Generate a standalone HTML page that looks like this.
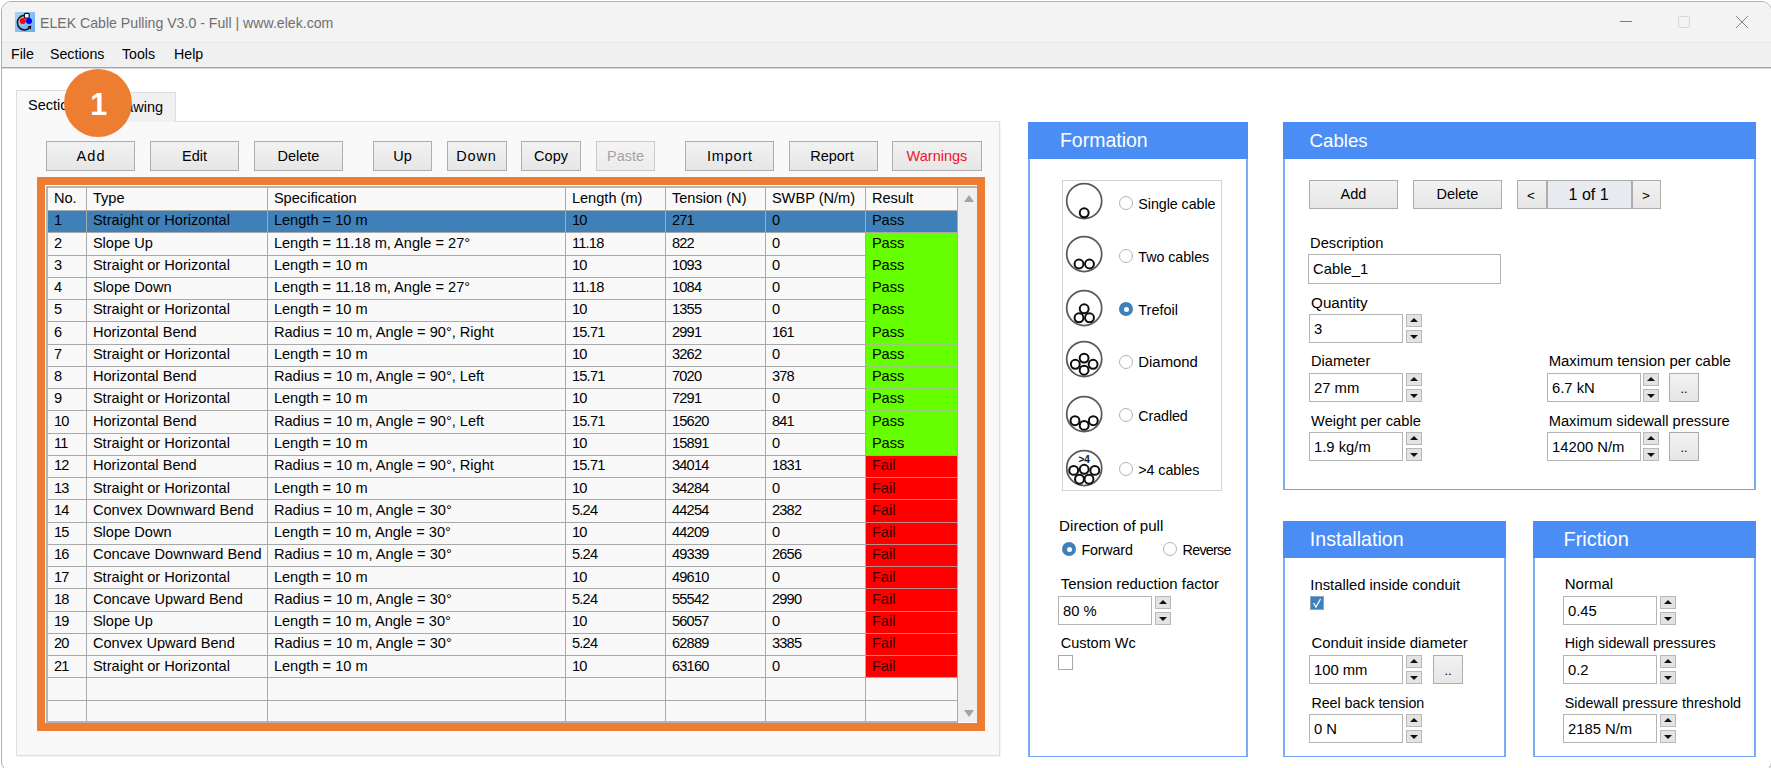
<!DOCTYPE html><html><head><meta charset="utf-8"><style>
*{margin:0;padding:0;box-sizing:content-box}
html,body{width:1771px;height:768px;overflow:hidden;background:#fff;font-family:"Liberation Sans", sans-serif}
.t{position:absolute;white-space:nowrap;line-height:1;}
.b{position:absolute}
.btn{position:absolute;border:1px solid #adadad}
.tb{position:absolute;border:1px solid #b4b4b4;background:#fff}
.spn{position:absolute;border:1px solid #b9b9b9;background:#e3e3e3}
.au,.ad{position:absolute;left:3px;width:0;height:0;border-left:4px solid transparent;border-right:4px solid transparent}
.au{top:3px;border-bottom:4px solid #111}
.ad{top:4px;border-top:4px solid #111}
.hdr{position:absolute;background:#4a8df5}
.pnl{position:absolute;border:1px solid #6fa2f3;border-left:2px solid #7eabf5;border-right:2px solid #7eabf5;background:#fff}
</style></head><body>
<div class="b" style="left:1px;top:1px;width:1771px;height:771px;border:1px solid #b0b0b0;border-radius:10px;background:#fff;box-sizing:border-box;overflow:hidden">
<div class="b" style="left:0;top:0;width:1776px;height:40px;background:#f3f3f3"></div>
<div class="b" style="left:0;top:40px;width:1776px;height:1px;background:#e6e6e6"></div>
<div class="b" style="left:0;top:41px;width:1776px;height:24px;background:#f0f0f0"></div>
<div class="b" style="left:0;top:65px;width:1776px;height:1px;background:#a3a3a3"></div>
<div class="b" style="left:0;top:66px;width:1776px;height:1px;background:#d8d8d8"></div>
</div>
<svg class="b" style="left:15px;top:12px" width="20" height="20" viewBox="0 0 20 20">
<defs><linearGradient id="ig" x1="0" y1="0" x2="1" y2="1"><stop offset="0" stop-color="#a9d3f8"/><stop offset="1" stop-color="#66acf4"/></linearGradient></defs>
<rect x="0" y="0" width="20" height="20" fill="url(#ig)"/>
<path d="M9.5 3.6 C5 3.4 2.4 7 2.4 10.6 C2.4 15 5.6 17.9 9.6 17.9 C12 17.9 13.6 17 14.8 15.6" fill="none" stroke="#161616" stroke-width="1.5"/>
<path d="M12.4 14.6 L16.3 13.4 L15.9 17.2 Z" fill="#111"/>
<rect x="9.4" y="1.4" width="4.8" height="4.8" rx="1.2" fill="#fff" stroke="#111" stroke-width="1.2"/>
<circle cx="7.8" cy="8.9" r="3" fill="#f00"/>
<circle cx="14" cy="8.9" r="3" fill="#00f"/>
</svg>
<div class="t " style="left:40px;top:15.93px;font-size:14.14px;color:#6f6f6f;">ELEK Cable Pulling V3.0 - Full | www.elek.com</div>
<div class="b" style="left:1620px;top:21px;width:12px;height:1px;background:#7b7b7b"></div>
<div class="b" style="left:1678px;top:16px;width:10px;height:10px;border:1px solid #d8d8d8;border-radius:2px"></div>
<svg class="b" style="left:1735px;top:15px" width="14" height="14" viewBox="0 0 14 14"><path d="M1 1 L13 13 M13 1 L1 13" stroke="#858585" stroke-width="1"/></svg>
<div class="t " style="left:11px;top:46.68px;font-size:14.2px;color:#000;">File</div>
<div class="t " style="left:50px;top:46.68px;font-size:14.2px;color:#000;">Sections</div>
<div class="t " style="left:122px;top:46.68px;font-size:14.2px;color:#000;">Tools</div>
<div class="t " style="left:174px;top:46.68px;font-size:14.2px;color:#000;">Help</div>
<div class="b" style="left:16px;top:121px;width:982px;height:633px;border:1px solid #dedede;box-shadow:1px 1px 1px rgba(0,0,0,0.04);background:#f9f9f9"></div>
<div class="b" style="left:98px;top:92px;width:76px;height:29px;border:1px solid #dedede;border-bottom:none;background:#f0f0f0"></div>
<div class="b" style="left:16px;top:90px;width:84px;height:32px;border:1px solid #dedede;border-bottom:none;background:#f9f9f9"></div>
<div class="t " style="left:28px;top:97.73px;font-size:14.5px;color:#000;">Sections</div>
<div class="t " style="left:110px;top:99.73px;font-size:14.5px;color:#000;">Drawing</div>
<div class="btn" style="left:46px;top:141px;width:87px;height:28px;border-color:#adadad;background:linear-gradient(#f2f2f2,#e6e6e6);"></div>
<div class="t " style="left:76.4px;top:148.93px;font-size:14.5px;color:#000;letter-spacing:1.2px;">Add</div>
<div class="btn" style="left:150px;top:141px;width:87px;height:28px;border-color:#adadad;background:linear-gradient(#f2f2f2,#e6e6e6);"></div>
<div class="t " style="left:182.0px;top:148.93px;font-size:14.5px;color:#000;">Edit</div>
<div class="btn" style="left:254px;top:141px;width:87px;height:28px;border-color:#adadad;background:linear-gradient(#f2f2f2,#e6e6e6);"></div>
<div class="t " style="left:277.5px;top:148.93px;font-size:14.5px;color:#000;">Delete</div>
<div class="btn" style="left:373px;top:141px;width:57px;height:28px;border-color:#adadad;background:linear-gradient(#f2f2f2,#e6e6e6);"></div>
<div class="t " style="left:393.2px;top:148.93px;font-size:14.5px;color:#000;">Up</div>
<div class="btn" style="left:447px;top:141px;width:58px;height:28px;border-color:#adadad;background:linear-gradient(#f2f2f2,#e6e6e6);"></div>
<div class="t " style="left:456.3px;top:148.93px;font-size:14.5px;color:#000;letter-spacing:0.8px;">Down</div>
<div class="btn" style="left:521px;top:141px;width:58px;height:28px;border-color:#adadad;background:linear-gradient(#f2f2f2,#e6e6e6);"></div>
<div class="t " style="left:534.1px;top:148.93px;font-size:14.5px;color:#000;">Copy</div>
<div class="btn" style="left:596px;top:141px;width:57px;height:28px;border-color:#c9c9c9;background:linear-gradient(#f4f4f4,#ececec);"></div>
<div class="t " style="left:607.0px;top:148.93px;font-size:14.5px;color:#a3a3a3;">Paste</div>
<div class="btn" style="left:685px;top:141px;width:87px;height:28px;border-color:#adadad;background:linear-gradient(#f2f2f2,#e6e6e6);"></div>
<div class="t " style="left:707.0px;top:148.93px;font-size:14.5px;color:#000;letter-spacing:0.8px;">Import</div>
<div class="btn" style="left:789px;top:141px;width:87px;height:28px;border-color:#adadad;background:linear-gradient(#f2f2f2,#e6e6e6);"></div>
<div class="t " style="left:810.2px;top:148.93px;font-size:14.5px;color:#000;">Report</div>
<div class="btn" style="left:892px;top:141px;width:88px;height:28px;border-color:#adadad;background:linear-gradient(#f2f2f2,#e6e6e6);"></div>
<div class="t " style="left:906.6px;top:148.93px;font-size:14.5px;color:#f0142a;">Warnings</div>
<div class="b" style="left:37px;top:177px;width:948px;height:554px;background:#ed7d31"></div>
<div class="b" style="left:45px;top:185px;width:932px;height:538px;background:#fff"></div>
<div class="b" style="left:46px;top:186px;width:931px;height:2px;background:#b4b4b4"></div>
<div class="b" style="left:46px;top:186px;width:2px;height:536px;background:#b4b4b4"></div>
<div class="b" style="left:958px;top:188px;width:19px;height:534px;background:#efefef"></div>
<div class="b" style="left:964px;top:195px;width:0;height:0;border-left:5px solid transparent;border-right:5px solid transparent;border-bottom:7px solid #a3a3a3"></div>
<div class="b" style="left:964px;top:710px;width:0;height:0;border-left:5px solid transparent;border-right:5px solid transparent;border-top:7px solid #a3a3a3"></div>
<div class="b" style="left:48px;top:188px;width:909px;height:534px;background:#f9f9f9"></div>
<div class="b" style="left:48px;top:211px;width:909px;height:21px;background:#3f80b8"></div>
<div class="b" style="left:866px;top:233px;width:91px;height:22px;background:#66ff00"></div>
<div class="b" style="left:866px;top:256px;width:91px;height:21px;background:#66ff00"></div>
<div class="b" style="left:866px;top:278px;width:91px;height:21px;background:#66ff00"></div>
<div class="b" style="left:866px;top:300px;width:91px;height:21px;background:#66ff00"></div>
<div class="b" style="left:866px;top:322px;width:91px;height:22px;background:#66ff00"></div>
<div class="b" style="left:866px;top:345px;width:91px;height:21px;background:#66ff00"></div>
<div class="b" style="left:866px;top:367px;width:91px;height:21px;background:#66ff00"></div>
<div class="b" style="left:866px;top:389px;width:91px;height:21px;background:#66ff00"></div>
<div class="b" style="left:866px;top:411px;width:91px;height:22px;background:#66ff00"></div>
<div class="b" style="left:866px;top:434px;width:91px;height:21px;background:#66ff00"></div>
<div class="b" style="left:866px;top:456px;width:91px;height:21px;background:#ff0000"></div>
<div class="b" style="left:866px;top:478px;width:91px;height:21px;background:#ff0000"></div>
<div class="b" style="left:866px;top:500px;width:91px;height:22px;background:#ff0000"></div>
<div class="b" style="left:866px;top:523px;width:91px;height:21px;background:#ff0000"></div>
<div class="b" style="left:866px;top:545px;width:91px;height:21px;background:#ff0000"></div>
<div class="b" style="left:866px;top:567px;width:91px;height:21px;background:#ff0000"></div>
<div class="b" style="left:866px;top:589px;width:91px;height:22px;background:#ff0000"></div>
<div class="b" style="left:866px;top:612px;width:91px;height:21px;background:#ff0000"></div>
<div class="b" style="left:866px;top:634px;width:91px;height:21px;background:#ff0000"></div>
<div class="b" style="left:866px;top:656px;width:91px;height:21px;background:#ff0000"></div>
<div class="b" style="left:48px;top:210px;width:818px;height:1px;background:#a9a9a9"></div>
<div class="b" style="left:866px;top:210px;width:91px;height:1px;background:#a9a9a9"></div>
<div class="b" style="left:48px;top:232px;width:818px;height:1px;background:#a9a9a9"></div>
<div class="b" style="left:866px;top:232px;width:91px;height:1px;background:#a9a9a9"></div>
<div class="b" style="left:48px;top:255px;width:818px;height:1px;background:#a9a9a9"></div>
<div class="b" style="left:866px;top:255px;width:91px;height:1px;background:#9cc87c"></div>
<div class="b" style="left:48px;top:277px;width:818px;height:1px;background:#a9a9a9"></div>
<div class="b" style="left:866px;top:277px;width:91px;height:1px;background:#9cc87c"></div>
<div class="b" style="left:48px;top:299px;width:818px;height:1px;background:#a9a9a9"></div>
<div class="b" style="left:866px;top:299px;width:91px;height:1px;background:#9cc87c"></div>
<div class="b" style="left:48px;top:321px;width:818px;height:1px;background:#a9a9a9"></div>
<div class="b" style="left:866px;top:321px;width:91px;height:1px;background:#9cc87c"></div>
<div class="b" style="left:48px;top:344px;width:818px;height:1px;background:#a9a9a9"></div>
<div class="b" style="left:866px;top:344px;width:91px;height:1px;background:#9cc87c"></div>
<div class="b" style="left:48px;top:366px;width:818px;height:1px;background:#a9a9a9"></div>
<div class="b" style="left:866px;top:366px;width:91px;height:1px;background:#9cc87c"></div>
<div class="b" style="left:48px;top:388px;width:818px;height:1px;background:#a9a9a9"></div>
<div class="b" style="left:866px;top:388px;width:91px;height:1px;background:#9cc87c"></div>
<div class="b" style="left:48px;top:410px;width:818px;height:1px;background:#a9a9a9"></div>
<div class="b" style="left:866px;top:410px;width:91px;height:1px;background:#9cc87c"></div>
<div class="b" style="left:48px;top:433px;width:818px;height:1px;background:#a9a9a9"></div>
<div class="b" style="left:866px;top:433px;width:91px;height:1px;background:#9cc87c"></div>
<div class="b" style="left:48px;top:455px;width:818px;height:1px;background:#a9a9a9"></div>
<div class="b" style="left:866px;top:455px;width:91px;height:1px;background:#a9a9a9"></div>
<div class="b" style="left:48px;top:477px;width:818px;height:1px;background:#a9a9a9"></div>
<div class="b" style="left:866px;top:477px;width:91px;height:1px;background:#c08888"></div>
<div class="b" style="left:48px;top:499px;width:818px;height:1px;background:#a9a9a9"></div>
<div class="b" style="left:866px;top:499px;width:91px;height:1px;background:#c08888"></div>
<div class="b" style="left:48px;top:522px;width:818px;height:1px;background:#a9a9a9"></div>
<div class="b" style="left:866px;top:522px;width:91px;height:1px;background:#c08888"></div>
<div class="b" style="left:48px;top:544px;width:818px;height:1px;background:#a9a9a9"></div>
<div class="b" style="left:866px;top:544px;width:91px;height:1px;background:#c08888"></div>
<div class="b" style="left:48px;top:566px;width:818px;height:1px;background:#a9a9a9"></div>
<div class="b" style="left:866px;top:566px;width:91px;height:1px;background:#c08888"></div>
<div class="b" style="left:48px;top:588px;width:818px;height:1px;background:#a9a9a9"></div>
<div class="b" style="left:866px;top:588px;width:91px;height:1px;background:#c08888"></div>
<div class="b" style="left:48px;top:611px;width:818px;height:1px;background:#a9a9a9"></div>
<div class="b" style="left:866px;top:611px;width:91px;height:1px;background:#c08888"></div>
<div class="b" style="left:48px;top:633px;width:818px;height:1px;background:#a9a9a9"></div>
<div class="b" style="left:866px;top:633px;width:91px;height:1px;background:#c08888"></div>
<div class="b" style="left:48px;top:655px;width:818px;height:1px;background:#a9a9a9"></div>
<div class="b" style="left:866px;top:655px;width:91px;height:1px;background:#c08888"></div>
<div class="b" style="left:48px;top:677px;width:818px;height:1px;background:#a9a9a9"></div>
<div class="b" style="left:866px;top:677px;width:91px;height:1px;background:#a9a9a9"></div>
<div class="b" style="left:48px;top:700px;width:818px;height:1px;background:#a9a9a9"></div>
<div class="b" style="left:866px;top:700px;width:91px;height:1px;background:#a9a9a9"></div>
<div class="b" style="left:48px;top:722px;width:818px;height:1px;background:#a9a9a9"></div>
<div class="b" style="left:866px;top:722px;width:91px;height:1px;background:#a9a9a9"></div>
<div class="b" style="left:46px;top:721px;width:912px;height:2px;background:#b4b4b4"></div>
<div class="b" style="left:86px;top:188px;width:1px;height:534px;background:#a9a9a9"></div>
<div class="b" style="left:267px;top:188px;width:1px;height:534px;background:#a9a9a9"></div>
<div class="b" style="left:565px;top:188px;width:1px;height:534px;background:#a9a9a9"></div>
<div class="b" style="left:665px;top:188px;width:1px;height:534px;background:#a9a9a9"></div>
<div class="b" style="left:765px;top:188px;width:1px;height:534px;background:#a9a9a9"></div>
<div class="b" style="left:865px;top:188px;width:1px;height:534px;background:#a9a9a9"></div>
<div class="b" style="left:957px;top:188px;width:1px;height:534px;background:#a9a9a9"></div>
<div class="t " style="left:53.9px;top:191.14px;font-size:14.6px;color:#000;">No.</div>
<div class="t " style="left:92.9px;top:191.14px;font-size:14.6px;color:#000;">Type</div>
<div class="t " style="left:273.9px;top:191.14px;font-size:14.6px;color:#000;">Specification</div>
<div class="t " style="left:571.9px;top:191.14px;font-size:14.6px;color:#000;">Length (m)</div>
<div class="t " style="left:671.9px;top:191.14px;font-size:14.6px;color:#000;">Tension (N)</div>
<div class="t " style="left:771.9px;top:191.14px;font-size:14.6px;color:#000;">SWBP (N/m)</div>
<div class="t " style="left:871.9px;top:191.14px;font-size:14.6px;color:#000;">Result</div>
<div class="t " style="left:53.9px;top:213.44px;font-size:14.6px;color:#000;letter-spacing:-0.75px;">1</div>
<div class="t " style="left:92.9px;top:213.44px;font-size:14.6px;color:#000;">Straight or Horizontal</div>
<div class="t " style="left:273.9px;top:213.44px;font-size:14.6px;color:#000;">Length = 10 m</div>
<div class="t " style="left:571.9px;top:213.44px;font-size:14.6px;color:#000;letter-spacing:-0.75px;">10</div>
<div class="t " style="left:671.9px;top:213.44px;font-size:14.6px;color:#000;letter-spacing:-0.75px;">271</div>
<div class="t " style="left:771.9px;top:213.44px;font-size:14.6px;color:#000;letter-spacing:-0.75px;">0</div>
<div class="t " style="left:871.9px;top:213.44px;font-size:14.6px;color:#000;">Pass</div>
<div class="t " style="left:53.9px;top:235.64px;font-size:14.6px;color:#000;letter-spacing:-0.75px;">2</div>
<div class="t " style="left:92.9px;top:235.64px;font-size:14.6px;color:#000;">Slope Up</div>
<div class="t " style="left:273.9px;top:235.64px;font-size:14.6px;color:#000;">Length = 11.18 m, Angle = 27°</div>
<div class="t " style="left:571.9px;top:235.64px;font-size:14.6px;color:#000;letter-spacing:-0.75px;">11.18</div>
<div class="t " style="left:671.9px;top:235.64px;font-size:14.6px;color:#000;letter-spacing:-0.75px;">822</div>
<div class="t " style="left:771.9px;top:235.64px;font-size:14.6px;color:#000;letter-spacing:-0.75px;">0</div>
<div class="t " style="left:871.9px;top:235.64px;font-size:14.6px;color:#000;">Pass</div>
<div class="t " style="left:53.9px;top:257.94px;font-size:14.6px;color:#000;letter-spacing:-0.75px;">3</div>
<div class="t " style="left:92.9px;top:257.94px;font-size:14.6px;color:#000;">Straight or Horizontal</div>
<div class="t " style="left:273.9px;top:257.94px;font-size:14.6px;color:#000;">Length = 10 m</div>
<div class="t " style="left:571.9px;top:257.94px;font-size:14.6px;color:#000;letter-spacing:-0.75px;">10</div>
<div class="t " style="left:671.9px;top:257.94px;font-size:14.6px;color:#000;letter-spacing:-0.75px;">1093</div>
<div class="t " style="left:771.9px;top:257.94px;font-size:14.6px;color:#000;letter-spacing:-0.75px;">0</div>
<div class="t " style="left:871.9px;top:257.94px;font-size:14.6px;color:#000;">Pass</div>
<div class="t " style="left:53.9px;top:280.14px;font-size:14.6px;color:#000;letter-spacing:-0.75px;">4</div>
<div class="t " style="left:92.9px;top:280.14px;font-size:14.6px;color:#000;">Slope Down</div>
<div class="t " style="left:273.9px;top:280.14px;font-size:14.6px;color:#000;">Length = 11.18 m, Angle = 27°</div>
<div class="t " style="left:571.9px;top:280.14px;font-size:14.6px;color:#000;letter-spacing:-0.75px;">11.18</div>
<div class="t " style="left:671.9px;top:280.14px;font-size:14.6px;color:#000;letter-spacing:-0.75px;">1084</div>
<div class="t " style="left:771.9px;top:280.14px;font-size:14.6px;color:#000;letter-spacing:-0.75px;">0</div>
<div class="t " style="left:871.9px;top:280.14px;font-size:14.6px;color:#000;">Pass</div>
<div class="t " style="left:53.9px;top:302.44px;font-size:14.6px;color:#000;letter-spacing:-0.75px;">5</div>
<div class="t " style="left:92.9px;top:302.44px;font-size:14.6px;color:#000;">Straight or Horizontal</div>
<div class="t " style="left:273.9px;top:302.44px;font-size:14.6px;color:#000;">Length = 10 m</div>
<div class="t " style="left:571.9px;top:302.44px;font-size:14.6px;color:#000;letter-spacing:-0.75px;">10</div>
<div class="t " style="left:671.9px;top:302.44px;font-size:14.6px;color:#000;letter-spacing:-0.75px;">1355</div>
<div class="t " style="left:771.9px;top:302.44px;font-size:14.6px;color:#000;letter-spacing:-0.75px;">0</div>
<div class="t " style="left:871.9px;top:302.44px;font-size:14.6px;color:#000;">Pass</div>
<div class="t " style="left:53.9px;top:324.74px;font-size:14.6px;color:#000;letter-spacing:-0.75px;">6</div>
<div class="t " style="left:92.9px;top:324.74px;font-size:14.6px;color:#000;">Horizontal Bend</div>
<div class="t " style="left:273.9px;top:324.74px;font-size:14.6px;color:#000;">Radius = 10 m, Angle = 90°, Right</div>
<div class="t " style="left:571.9px;top:324.74px;font-size:14.6px;color:#000;letter-spacing:-0.75px;">15.71</div>
<div class="t " style="left:671.9px;top:324.74px;font-size:14.6px;color:#000;letter-spacing:-0.75px;">2991</div>
<div class="t " style="left:771.9px;top:324.74px;font-size:14.6px;color:#000;letter-spacing:-0.75px;">161</div>
<div class="t " style="left:871.9px;top:324.74px;font-size:14.6px;color:#000;">Pass</div>
<div class="t " style="left:53.9px;top:346.94px;font-size:14.6px;color:#000;letter-spacing:-0.75px;">7</div>
<div class="t " style="left:92.9px;top:346.94px;font-size:14.6px;color:#000;">Straight or Horizontal</div>
<div class="t " style="left:273.9px;top:346.94px;font-size:14.6px;color:#000;">Length = 10 m</div>
<div class="t " style="left:571.9px;top:346.94px;font-size:14.6px;color:#000;letter-spacing:-0.75px;">10</div>
<div class="t " style="left:671.9px;top:346.94px;font-size:14.6px;color:#000;letter-spacing:-0.75px;">3262</div>
<div class="t " style="left:771.9px;top:346.94px;font-size:14.6px;color:#000;letter-spacing:-0.75px;">0</div>
<div class="t " style="left:871.9px;top:346.94px;font-size:14.6px;color:#000;">Pass</div>
<div class="t " style="left:53.9px;top:369.24px;font-size:14.6px;color:#000;letter-spacing:-0.75px;">8</div>
<div class="t " style="left:92.9px;top:369.24px;font-size:14.6px;color:#000;">Horizontal Bend</div>
<div class="t " style="left:273.9px;top:369.24px;font-size:14.6px;color:#000;">Radius = 10 m, Angle = 90°, Left</div>
<div class="t " style="left:571.9px;top:369.24px;font-size:14.6px;color:#000;letter-spacing:-0.75px;">15.71</div>
<div class="t " style="left:671.9px;top:369.24px;font-size:14.6px;color:#000;letter-spacing:-0.75px;">7020</div>
<div class="t " style="left:771.9px;top:369.24px;font-size:14.6px;color:#000;letter-spacing:-0.75px;">378</div>
<div class="t " style="left:871.9px;top:369.24px;font-size:14.6px;color:#000;">Pass</div>
<div class="t " style="left:53.9px;top:391.44px;font-size:14.6px;color:#000;letter-spacing:-0.75px;">9</div>
<div class="t " style="left:92.9px;top:391.44px;font-size:14.6px;color:#000;">Straight or Horizontal</div>
<div class="t " style="left:273.9px;top:391.44px;font-size:14.6px;color:#000;">Length = 10 m</div>
<div class="t " style="left:571.9px;top:391.44px;font-size:14.6px;color:#000;letter-spacing:-0.75px;">10</div>
<div class="t " style="left:671.9px;top:391.44px;font-size:14.6px;color:#000;letter-spacing:-0.75px;">7291</div>
<div class="t " style="left:771.9px;top:391.44px;font-size:14.6px;color:#000;letter-spacing:-0.75px;">0</div>
<div class="t " style="left:871.9px;top:391.44px;font-size:14.6px;color:#000;">Pass</div>
<div class="t " style="left:53.9px;top:413.74px;font-size:14.6px;color:#000;letter-spacing:-0.75px;">10</div>
<div class="t " style="left:92.9px;top:413.74px;font-size:14.6px;color:#000;">Horizontal Bend</div>
<div class="t " style="left:273.9px;top:413.74px;font-size:14.6px;color:#000;">Radius = 10 m, Angle = 90°, Left</div>
<div class="t " style="left:571.9px;top:413.74px;font-size:14.6px;color:#000;letter-spacing:-0.75px;">15.71</div>
<div class="t " style="left:671.9px;top:413.74px;font-size:14.6px;color:#000;letter-spacing:-0.75px;">15620</div>
<div class="t " style="left:771.9px;top:413.74px;font-size:14.6px;color:#000;letter-spacing:-0.75px;">841</div>
<div class="t " style="left:871.9px;top:413.74px;font-size:14.6px;color:#000;">Pass</div>
<div class="t " style="left:53.9px;top:436.04px;font-size:14.6px;color:#000;letter-spacing:-0.75px;">11</div>
<div class="t " style="left:92.9px;top:436.04px;font-size:14.6px;color:#000;">Straight or Horizontal</div>
<div class="t " style="left:273.9px;top:436.04px;font-size:14.6px;color:#000;">Length = 10 m</div>
<div class="t " style="left:571.9px;top:436.04px;font-size:14.6px;color:#000;letter-spacing:-0.75px;">10</div>
<div class="t " style="left:671.9px;top:436.04px;font-size:14.6px;color:#000;letter-spacing:-0.75px;">15891</div>
<div class="t " style="left:771.9px;top:436.04px;font-size:14.6px;color:#000;letter-spacing:-0.75px;">0</div>
<div class="t " style="left:871.9px;top:436.04px;font-size:14.6px;color:#000;">Pass</div>
<div class="t " style="left:53.9px;top:458.24px;font-size:14.6px;color:#000;letter-spacing:-0.75px;">12</div>
<div class="t " style="left:92.9px;top:458.24px;font-size:14.6px;color:#000;">Horizontal Bend</div>
<div class="t " style="left:273.9px;top:458.24px;font-size:14.6px;color:#000;">Radius = 10 m, Angle = 90°, Right</div>
<div class="t " style="left:571.9px;top:458.24px;font-size:14.6px;color:#000;letter-spacing:-0.75px;">15.71</div>
<div class="t " style="left:671.9px;top:458.24px;font-size:14.6px;color:#000;letter-spacing:-0.75px;">34014</div>
<div class="t " style="left:771.9px;top:458.24px;font-size:14.6px;color:#000;letter-spacing:-0.75px;">1831</div>
<div class="t " style="left:871.9px;top:458.24px;font-size:14.6px;color:#3a0000;">Fail</div>
<div class="t " style="left:53.9px;top:480.54px;font-size:14.6px;color:#000;letter-spacing:-0.75px;">13</div>
<div class="t " style="left:92.9px;top:480.54px;font-size:14.6px;color:#000;">Straight or Horizontal</div>
<div class="t " style="left:273.9px;top:480.54px;font-size:14.6px;color:#000;">Length = 10 m</div>
<div class="t " style="left:571.9px;top:480.54px;font-size:14.6px;color:#000;letter-spacing:-0.75px;">10</div>
<div class="t " style="left:671.9px;top:480.54px;font-size:14.6px;color:#000;letter-spacing:-0.75px;">34284</div>
<div class="t " style="left:771.9px;top:480.54px;font-size:14.6px;color:#000;letter-spacing:-0.75px;">0</div>
<div class="t " style="left:871.9px;top:480.54px;font-size:14.6px;color:#3a0000;">Fail</div>
<div class="t " style="left:53.9px;top:502.74px;font-size:14.6px;color:#000;letter-spacing:-0.75px;">14</div>
<div class="t " style="left:92.9px;top:502.74px;font-size:14.6px;color:#000;">Convex Downward Bend</div>
<div class="t " style="left:273.9px;top:502.74px;font-size:14.6px;color:#000;">Radius = 10 m, Angle = 30°</div>
<div class="t " style="left:571.9px;top:502.74px;font-size:14.6px;color:#000;letter-spacing:-0.75px;">5.24</div>
<div class="t " style="left:671.9px;top:502.74px;font-size:14.6px;color:#000;letter-spacing:-0.75px;">44254</div>
<div class="t " style="left:771.9px;top:502.74px;font-size:14.6px;color:#000;letter-spacing:-0.75px;">2382</div>
<div class="t " style="left:871.9px;top:502.74px;font-size:14.6px;color:#3a0000;">Fail</div>
<div class="t " style="left:53.9px;top:525.04px;font-size:14.6px;color:#000;letter-spacing:-0.75px;">15</div>
<div class="t " style="left:92.9px;top:525.04px;font-size:14.6px;color:#000;">Slope Down</div>
<div class="t " style="left:273.9px;top:525.04px;font-size:14.6px;color:#000;">Length = 10 m, Angle = 30°</div>
<div class="t " style="left:571.9px;top:525.04px;font-size:14.6px;color:#000;letter-spacing:-0.75px;">10</div>
<div class="t " style="left:671.9px;top:525.04px;font-size:14.6px;color:#000;letter-spacing:-0.75px;">44209</div>
<div class="t " style="left:771.9px;top:525.04px;font-size:14.6px;color:#000;letter-spacing:-0.75px;">0</div>
<div class="t " style="left:871.9px;top:525.04px;font-size:14.6px;color:#3a0000;">Fail</div>
<div class="t " style="left:53.9px;top:547.34px;font-size:14.6px;color:#000;letter-spacing:-0.75px;">16</div>
<div class="t " style="left:92.9px;top:547.34px;font-size:14.6px;color:#000;">Concave Downward Bend</div>
<div class="t " style="left:273.9px;top:547.34px;font-size:14.6px;color:#000;">Radius = 10 m, Angle = 30°</div>
<div class="t " style="left:571.9px;top:547.34px;font-size:14.6px;color:#000;letter-spacing:-0.75px;">5.24</div>
<div class="t " style="left:671.9px;top:547.34px;font-size:14.6px;color:#000;letter-spacing:-0.75px;">49339</div>
<div class="t " style="left:771.9px;top:547.34px;font-size:14.6px;color:#000;letter-spacing:-0.75px;">2656</div>
<div class="t " style="left:871.9px;top:547.34px;font-size:14.6px;color:#3a0000;">Fail</div>
<div class="t " style="left:53.9px;top:569.54px;font-size:14.6px;color:#000;letter-spacing:-0.75px;">17</div>
<div class="t " style="left:92.9px;top:569.54px;font-size:14.6px;color:#000;">Straight or Horizontal</div>
<div class="t " style="left:273.9px;top:569.54px;font-size:14.6px;color:#000;">Length = 10 m</div>
<div class="t " style="left:571.9px;top:569.54px;font-size:14.6px;color:#000;letter-spacing:-0.75px;">10</div>
<div class="t " style="left:671.9px;top:569.54px;font-size:14.6px;color:#000;letter-spacing:-0.75px;">49610</div>
<div class="t " style="left:771.9px;top:569.54px;font-size:14.6px;color:#000;letter-spacing:-0.75px;">0</div>
<div class="t " style="left:871.9px;top:569.54px;font-size:14.6px;color:#3a0000;">Fail</div>
<div class="t " style="left:53.9px;top:591.84px;font-size:14.6px;color:#000;letter-spacing:-0.75px;">18</div>
<div class="t " style="left:92.9px;top:591.84px;font-size:14.6px;color:#000;">Concave Upward Bend</div>
<div class="t " style="left:273.9px;top:591.84px;font-size:14.6px;color:#000;">Radius = 10 m, Angle = 30°</div>
<div class="t " style="left:571.9px;top:591.84px;font-size:14.6px;color:#000;letter-spacing:-0.75px;">5.24</div>
<div class="t " style="left:671.9px;top:591.84px;font-size:14.6px;color:#000;letter-spacing:-0.75px;">55542</div>
<div class="t " style="left:771.9px;top:591.84px;font-size:14.6px;color:#000;letter-spacing:-0.75px;">2990</div>
<div class="t " style="left:871.9px;top:591.84px;font-size:14.6px;color:#3a0000;">Fail</div>
<div class="t " style="left:53.9px;top:614.04px;font-size:14.6px;color:#000;letter-spacing:-0.75px;">19</div>
<div class="t " style="left:92.9px;top:614.04px;font-size:14.6px;color:#000;">Slope Up</div>
<div class="t " style="left:273.9px;top:614.04px;font-size:14.6px;color:#000;">Length = 10 m, Angle = 30°</div>
<div class="t " style="left:571.9px;top:614.04px;font-size:14.6px;color:#000;letter-spacing:-0.75px;">10</div>
<div class="t " style="left:671.9px;top:614.04px;font-size:14.6px;color:#000;letter-spacing:-0.75px;">56057</div>
<div class="t " style="left:771.9px;top:614.04px;font-size:14.6px;color:#000;letter-spacing:-0.75px;">0</div>
<div class="t " style="left:871.9px;top:614.04px;font-size:14.6px;color:#3a0000;">Fail</div>
<div class="t " style="left:53.9px;top:636.34px;font-size:14.6px;color:#000;letter-spacing:-0.75px;">20</div>
<div class="t " style="left:92.9px;top:636.34px;font-size:14.6px;color:#000;">Convex Upward Bend</div>
<div class="t " style="left:273.9px;top:636.34px;font-size:14.6px;color:#000;">Radius = 10 m, Angle = 30°</div>
<div class="t " style="left:571.9px;top:636.34px;font-size:14.6px;color:#000;letter-spacing:-0.75px;">5.24</div>
<div class="t " style="left:671.9px;top:636.34px;font-size:14.6px;color:#000;letter-spacing:-0.75px;">62889</div>
<div class="t " style="left:771.9px;top:636.34px;font-size:14.6px;color:#000;letter-spacing:-0.75px;">3385</div>
<div class="t " style="left:871.9px;top:636.34px;font-size:14.6px;color:#3a0000;">Fail</div>
<div class="t " style="left:53.9px;top:658.64px;font-size:14.6px;color:#000;letter-spacing:-0.75px;">21</div>
<div class="t " style="left:92.9px;top:658.64px;font-size:14.6px;color:#000;">Straight or Horizontal</div>
<div class="t " style="left:273.9px;top:658.64px;font-size:14.6px;color:#000;">Length = 10 m</div>
<div class="t " style="left:571.9px;top:658.64px;font-size:14.6px;color:#000;letter-spacing:-0.75px;">10</div>
<div class="t " style="left:671.9px;top:658.64px;font-size:14.6px;color:#000;letter-spacing:-0.75px;">63160</div>
<div class="t " style="left:771.9px;top:658.64px;font-size:14.6px;color:#000;letter-spacing:-0.75px;">0</div>
<div class="t " style="left:871.9px;top:658.64px;font-size:14.6px;color:#3a0000;">Fail</div>
<div class="b" style="left:64px;top:69px;width:68px;height:68px;border-radius:50%;background:#ed7d31"></div>
<div class="t" style="left:64.7px;top:89px;width:68px;text-align:center;font-size:30.5px;font-weight:bold;color:#fff">1</div>
<div class="pnl" style="left:1028px;top:122px;width:216px;height:633px"></div>
<div class="hdr" style="left:1028px;top:122px;width:220px;height:37px"></div>
<div class="t " style="left:1059.9px;top:130.78px;font-size:19.51px;color:#fff;">Formation</div>
<div class="b" style="left:1062px;top:180px;width:158px;height:309px;border:1px solid #d4d4d4;background:#fff"></div>
<div class="b" style="left:1119px;top:196px;width:12px;height:12px;border-radius:50%;border:1px solid #b3b3b3;background:#fff"></div>
<div class="t " style="left:1138.3px;top:196.90px;font-size:14.3px;color:#000;letter-spacing:-0.06px;">Single cable</div>
<div class="b" style="left:1119px;top:249px;width:12px;height:12px;border-radius:50%;border:1px solid #b3b3b3;background:#fff"></div>
<div class="t " style="left:1138.3px;top:249.90px;font-size:14.3px;color:#000;letter-spacing:-0.07px;">Two cables</div>
<div class="b" style="left:1119px;top:302px;width:14px;height:14px;border-radius:50%;background:#3d80ba"></div>
<div class="b" style="left:1123.5px;top:306.5px;width:5px;height:5px;border-radius:50%;background:#fff"></div>
<div class="t " style="left:1138.3px;top:302.75px;font-size:14.47px;color:#000;">Trefoil</div>
<div class="b" style="left:1119px;top:355px;width:12px;height:12px;border-radius:50%;border:1px solid #b3b3b3;background:#fff"></div>
<div class="t " style="left:1138.3px;top:355.39px;font-size:14.9px;color:#000;">Diamond</div>
<div class="b" style="left:1119px;top:408px;width:12px;height:12px;border-radius:50%;border:1px solid #b3b3b3;background:#fff"></div>
<div class="t " style="left:1138.3px;top:408.90px;font-size:14.3px;color:#000;letter-spacing:-0.09px;">Cradled</div>
<div class="b" style="left:1119px;top:462px;width:12px;height:12px;border-radius:50%;border:1px solid #b3b3b3;background:#fff"></div>
<div class="t " style="left:1138.3px;top:462.90px;font-size:14.3px;color:#000;letter-spacing:-0.07px;">&gt;4 cables</div>
<svg class="b" style="left:1064px;top:180.8px" width="41" height="41" viewBox="1064 180.8 41 41"><circle cx="1084.2" cy="200.8" r="17.5" fill="none" stroke="#5a5a5a" stroke-width="1.75"/><circle cx="1084.2" cy="212.6" r="4.45" fill="#fff" stroke="#0d0d0d" stroke-width="2"/></svg>
<svg class="b" style="left:1064px;top:234.1px" width="41" height="41" viewBox="1064 234.1 41 41"><circle cx="1084.2" cy="254.1" r="17.5" fill="none" stroke="#5a5a5a" stroke-width="1.75"/><circle cx="1079.0" cy="264.1" r="4.45" fill="#fff" stroke="#0d0d0d" stroke-width="2"/><circle cx="1089.5" cy="264.1" r="4.45" fill="#fff" stroke="#0d0d0d" stroke-width="2"/></svg>
<svg class="b" style="left:1064px;top:287.8px" width="41" height="41" viewBox="1064 287.8 41 41"><circle cx="1084.2" cy="307.8" r="17.5" fill="none" stroke="#5a5a5a" stroke-width="1.75"/><circle cx="1084.2" cy="308.6" r="4.45" fill="#fff" stroke="#0d0d0d" stroke-width="2"/><circle cx="1079.0" cy="317.6" r="4.45" fill="#fff" stroke="#0d0d0d" stroke-width="2"/><circle cx="1089.5" cy="317.6" r="4.45" fill="#fff" stroke="#0d0d0d" stroke-width="2"/></svg>
<svg class="b" style="left:1064px;top:339.3px" width="41" height="41" viewBox="1064 339.3 41 41"><circle cx="1084.2" cy="359.3" r="17.5" fill="none" stroke="#5a5a5a" stroke-width="1.75"/><circle cx="1084.1" cy="358.4" r="4.45" fill="#fff" stroke="#0d0d0d" stroke-width="2"/><circle cx="1075.3" cy="364.6" r="4.45" fill="#fff" stroke="#0d0d0d" stroke-width="2"/><circle cx="1093.1" cy="364.6" r="4.45" fill="#fff" stroke="#0d0d0d" stroke-width="2"/><circle cx="1084.1" cy="370.5" r="4.45" fill="#fff" stroke="#0d0d0d" stroke-width="2"/></svg>
<svg class="b" style="left:1064px;top:393.6px" width="41" height="41" viewBox="1064 393.6 41 41"><circle cx="1084.2" cy="413.6" r="17.5" fill="none" stroke="#5a5a5a" stroke-width="1.75"/><circle cx="1075.0" cy="420.3" r="4.45" fill="#fff" stroke="#0d0d0d" stroke-width="2"/><circle cx="1093.3" cy="420.3" r="4.45" fill="#fff" stroke="#0d0d0d" stroke-width="2"/><circle cx="1084.2" cy="425.0" r="4.45" fill="#fff" stroke="#0d0d0d" stroke-width="2"/></svg>
<svg class="b" style="left:1064px;top:448.2px" width="41" height="41" viewBox="1064 448.2 41 41"><circle cx="1084.2" cy="468.2" r="17.5" fill="none" stroke="#5a5a5a" stroke-width="1.75"/><circle cx="1073.7" cy="470.6" r="4.45" fill="#fff" stroke="#0d0d0d" stroke-width="2"/><circle cx="1084.2" cy="469.5" r="4.45" fill="#fff" stroke="#0d0d0d" stroke-width="2"/><circle cx="1094.8" cy="470.6" r="4.45" fill="#fff" stroke="#0d0d0d" stroke-width="2"/><circle cx="1079.5" cy="479.4" r="4.45" fill="#fff" stroke="#0d0d0d" stroke-width="2"/><circle cx="1089.0" cy="479.4" r="4.45" fill="#fff" stroke="#0d0d0d" stroke-width="2"/><text x="1084.2" y="462.9" font-size="10" font-family="Liberation Sans" text-anchor="middle" font-weight="bold" fill="#101030">&gt;4</text></svg>
<div class="t " style="left:1059.1px;top:517.68px;font-size:15.14px;color:#000;">Direction of pull</div>
<div class="b" style="left:1062px;top:542px;width:14px;height:14px;border-radius:50%;background:#3d80ba"></div>
<div class="b" style="left:1066.5px;top:546.5px;width:5px;height:5px;border-radius:50%;background:#fff"></div>
<div class="t " style="left:1081.4px;top:542.80px;font-size:14.3px;color:#000;letter-spacing:-0.16px;">Forward</div>
<div class="b" style="left:1163px;top:542px;width:12px;height:12px;border-radius:50%;border:1px solid #b3b3b3;background:#fff"></div>
<div class="t " style="left:1182.6px;top:542.80px;font-size:14.3px;color:#000;letter-spacing:-0.73px;">Reverse</div>
<div class="t " style="left:1060.8px;top:576.87px;font-size:14.92px;color:#000;">Tension reduction factor</div>
<div class="tb" style="left:1058px;top:596px;width:92px;height:27px;"></div>
<div class="t " style="left:1063.0px;top:603.77px;font-size:14.8px;color:#000;">80 %</div>
<div class="spn" style="left:1155px;top:596px;width:14px;height:11px;"><div class="au"></div></div>
<div class="spn" style="left:1155px;top:612px;width:14px;height:11px;"><div class="ad"></div></div>
<div class="t " style="left:1060.8px;top:636.22px;font-size:14.51px;color:#000;">Custom Wc</div>
<div class="b" style="left:1058px;top:655px;width:13px;height:13px;border:1px solid #a8a8a8;background:#fff"></div>
<div class="pnl" style="left:1283px;top:122px;width:469px;height:366px"></div>
<div class="hdr" style="left:1283px;top:122px;width:473px;height:37px"></div>
<div class="t " style="left:1309.6px;top:131.71px;font-size:18.65px;color:#fff;">Cables</div>
<div class="btn" style="left:1309px;top:180px;width:87px;height:27px;border-color:#adadad;background:linear-gradient(#f2f2f2,#e6e6e6);"></div>
<div class="t " style="left:1340.6px;top:187.43px;font-size:14.5px;color:#000;">Add</div>
<div class="btn" style="left:1413px;top:180px;width:87px;height:27px;border-color:#adadad;background:linear-gradient(#f2f2f2,#e6e6e6);"></div>
<div class="t " style="left:1436.5px;top:187.43px;font-size:14.5px;color:#000;">Delete</div>
<div class="btn" style="left:1517px;top:180px;width:142px;height:27px;background:#e7ebef"></div>
<div class="b" style="left:1518px;top:181px;width:28px;height:27px;background:linear-gradient(#f2f2f2,#e6e6e6)"></div>
<div class="b" style="left:1633px;top:181px;width:27px;height:27px;background:linear-gradient(#f2f2f2,#e6e6e6)"></div>
<div class="b" style="left:1546px;top:181px;width:2px;height:27px;background:#adadad"></div>
<div class="b" style="left:1631px;top:181px;width:2px;height:27px;background:#adadad"></div>
<div class="t " style="left:1527px;top:188.57px;font-size:13.5px;color:#000;">&lt;</div>
<div class="t " style="left:1568.6px;top:187.46px;font-size:16px;color:#000;">1 of 1</div>
<div class="t " style="left:1642px;top:188.57px;font-size:13.5px;color:#000;">&gt;</div>
<div class="t " style="left:1310.1px;top:236.19px;font-size:14.66px;color:#000;">Description</div>
<div class="tb" style="left:1308px;top:254px;width:191px;height:28px;"></div>
<div class="t " style="left:1313.0px;top:261.77px;font-size:14.8px;color:#000;">Cable_1</div>
<div class="t " style="left:1311.1px;top:294.64px;font-size:15.19px;color:#000;">Quantity</div>
<div class="tb" style="left:1309px;top:314px;width:92px;height:27px;"></div>
<div class="t " style="left:1314.0px;top:321.77px;font-size:14.8px;color:#000;">3</div>
<div class="spn" style="left:1406px;top:314px;width:14px;height:11px;"><div class="au"></div></div>
<div class="spn" style="left:1406px;top:330px;width:14px;height:11px;"><div class="ad"></div></div>
<div class="t " style="left:1311.1px;top:354.26px;font-size:14.58px;color:#000;">Diameter</div>
<div class="tb" style="left:1309px;top:373px;width:92px;height:27px;"></div>
<div class="t " style="left:1314.0px;top:380.77px;font-size:14.8px;color:#000;">27 mm</div>
<div class="spn" style="left:1406px;top:373px;width:14px;height:11px;"><div class="au"></div></div>
<div class="spn" style="left:1406px;top:389px;width:14px;height:11px;"><div class="ad"></div></div>
<div class="t " style="left:1311.1px;top:413.59px;font-size:14.66px;color:#000;">Weight per cable</div>
<div class="tb" style="left:1309px;top:432px;width:92px;height:27px;"></div>
<div class="t " style="left:1314.0px;top:439.77px;font-size:14.8px;color:#000;">1.9 kg/m</div>
<div class="spn" style="left:1406px;top:432px;width:14px;height:11px;"><div class="au"></div></div>
<div class="spn" style="left:1406px;top:448px;width:14px;height:11px;"><div class="ad"></div></div>
<div class="t " style="left:1548.7px;top:354.09px;font-size:14.9px;color:#000;">Maximum tension per cable</div>
<div class="tb" style="left:1547px;top:373px;width:92px;height:27px;"></div>
<div class="t " style="left:1552.0px;top:380.77px;font-size:14.8px;color:#000;">6.7 kN</div>
<div class="spn" style="left:1643px;top:373px;width:14px;height:11px;"><div class="au"></div></div>
<div class="spn" style="left:1643px;top:389px;width:14px;height:11px;"><div class="ad"></div></div>
<div class="btn" style="left:1669px;top:373px;width:28px;height:27px;border-color:#adadad;background:linear-gradient(#f2f2f2,#e6e6e6);"></div>
<div class="t " style="left:1680.4px;top:381.70px;font-size:13px;color:#000;">..</div>
<div class="t " style="left:1548.7px;top:413.77px;font-size:14.68px;color:#000;">Maximum sidewall pressure</div>
<div class="tb" style="left:1547px;top:432px;width:92px;height:27px;"></div>
<div class="t " style="left:1552.0px;top:439.77px;font-size:14.8px;color:#000;">14200 N/m</div>
<div class="spn" style="left:1643px;top:432px;width:14px;height:11px;"><div class="au"></div></div>
<div class="spn" style="left:1643px;top:448px;width:14px;height:11px;"><div class="ad"></div></div>
<div class="btn" style="left:1669px;top:432px;width:28px;height:27px;border-color:#adadad;background:linear-gradient(#f2f2f2,#e6e6e6);"></div>
<div class="t " style="left:1680.4px;top:440.70px;font-size:13px;color:#000;">..</div>
<div class="pnl" style="left:1283px;top:521px;width:219px;height:234px"></div>
<div class="hdr" style="left:1283px;top:521px;width:223px;height:37px"></div>
<div class="t " style="left:1309.8px;top:530.49px;font-size:19.62px;color:#fff;">Installation</div>
<div class="t " style="left:1310.3px;top:577.96px;font-size:14.81px;color:#000;">Installed inside conduit</div>
<div class="b" style="left:1310px;top:596px;width:12px;height:12px;border:1px solid #8fa6bd;background:#3d7fc0"></div>
<svg class="b" style="left:1310px;top:596px" width="14" height="14" viewBox="0 0 14 14"><path d="M3.5 7 L6 11 L10.5 3" fill="none" stroke="#fff" stroke-width="1.3"/></svg>
<div class="t " style="left:1311.4px;top:635.80px;font-size:14.89px;color:#000;">Conduit inside diameter</div>
<div class="tb" style="left:1309px;top:655px;width:92px;height:27px;"></div>
<div class="t " style="left:1314.0px;top:662.77px;font-size:14.8px;color:#000;">100 mm</div>
<div class="spn" style="left:1406px;top:655px;width:14px;height:11px;"><div class="au"></div></div>
<div class="spn" style="left:1406px;top:671px;width:14px;height:11px;"><div class="ad"></div></div>
<div class="btn" style="left:1433px;top:655px;width:28px;height:27px;border-color:#adadad;background:linear-gradient(#f2f2f2,#e6e6e6);"></div>
<div class="t " style="left:1444.4px;top:663.70px;font-size:13px;color:#000;">..</div>
<div class="t " style="left:1311.4px;top:695.70px;font-size:14.3px;color:#000;letter-spacing:-0.05px;">Reel back tension</div>
<div class="tb" style="left:1309px;top:714px;width:92px;height:27px;"></div>
<div class="t " style="left:1314.0px;top:721.77px;font-size:14.8px;color:#000;">0 N</div>
<div class="spn" style="left:1406px;top:714px;width:14px;height:11px;"><div class="au"></div></div>
<div class="spn" style="left:1406px;top:730px;width:14px;height:11px;"><div class="ad"></div></div>
<div class="pnl" style="left:1533px;top:521px;width:219px;height:234px"></div>
<div class="hdr" style="left:1533px;top:521px;width:223px;height:37px"></div>
<div class="t " style="left:1563.5px;top:530.25px;font-size:19.91px;color:#fff;">Friction</div>
<div class="t " style="left:1564.7px;top:576.48px;font-size:15.03px;color:#000;">Normal</div>
<div class="tb" style="left:1563px;top:596px;width:92px;height:27px;"></div>
<div class="t " style="left:1568.0px;top:603.77px;font-size:14.8px;color:#000;">0.45</div>
<div class="spn" style="left:1660px;top:596px;width:14px;height:11px;"><div class="au"></div></div>
<div class="spn" style="left:1660px;top:612px;width:14px;height:11px;"><div class="ad"></div></div>
<div class="t " style="left:1564.7px;top:636.29px;font-size:14.31px;color:#000;">High sidewall pressures</div>
<div class="tb" style="left:1563px;top:655px;width:92px;height:27px;"></div>
<div class="t " style="left:1568.0px;top:662.77px;font-size:14.8px;color:#000;">0.2</div>
<div class="spn" style="left:1660px;top:655px;width:14px;height:11px;"><div class="au"></div></div>
<div class="spn" style="left:1660px;top:671px;width:14px;height:11px;"><div class="ad"></div></div>
<div class="t " style="left:1564.7px;top:695.64px;font-size:14.36px;color:#000;">Sidewall pressure threshold</div>
<div class="tb" style="left:1563px;top:714px;width:92px;height:27px;"></div>
<div class="t " style="left:1568.0px;top:721.77px;font-size:14.8px;color:#000;">2185 N/m</div>
<div class="spn" style="left:1660px;top:714px;width:14px;height:11px;"><div class="au"></div></div>
<div class="spn" style="left:1660px;top:730px;width:14px;height:11px;"><div class="ad"></div></div>
</body></html>
